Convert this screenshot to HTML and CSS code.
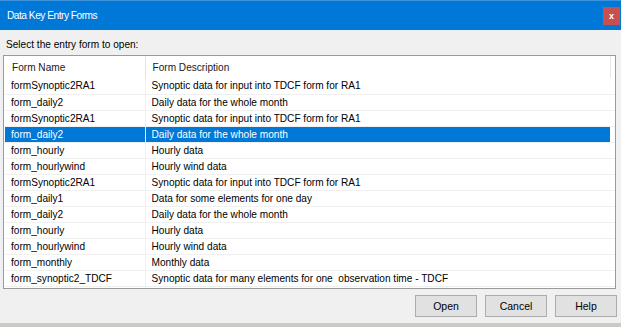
FILE: index.html
```html
<!DOCTYPE html>
<html lang="en">
<head>
  <meta charset="UTF-8" />
  <title>Data Key Entry Forms</title>
  <link rel="stylesheet" href="styles.css">
</head>
<body>
  <div class="window">
    <!-- TITLE BAR -->
    <div class="titlebar">
      <span class="title">Data Key Entry Forms</span>
      <span class="close">x</span>
    </div>

    <!-- DIALOG BODY -->
    <div class="content">
      <p class="prompt">Select the entry form to open:</p>

      <div class="listview">
        <table>
          <thead>
            <tr><th class="c-name">Form Name</th><th class="c-desc">Form Description</th><th class="c-fill"></th></tr>
          </thead>
          <tbody>
            <tr><td>formSynoptic2RA1</td><td>Synoptic data for input into TDCF form for RA1</td><td></td></tr>
            <tr><td>form_daily2</td><td>Daily data for the whole month</td><td></td></tr>
            <tr><td>formSynoptic2RA1</td><td>Synoptic data for input into TDCF form for RA1</td><td></td></tr>
            <tr class="selected"><td>form_daily2</td><td>Daily data for the whole month</td><td></td></tr>
            <tr><td>form_hourly</td><td>Hourly data</td><td></td></tr>
            <tr><td>form_hourlywind</td><td>Hourly wind data</td><td></td></tr>
            <tr><td>formSynoptic2RA1</td><td>Synoptic data for input into TDCF form for RA1</td><td></td></tr>
            <tr><td>form_daily1</td><td>Data for some elements for one day</td><td></td></tr>
            <tr><td>form_daily2</td><td>Daily data for the whole month</td><td></td></tr>
            <tr><td>form_hourly</td><td>Hourly data</td><td></td></tr>
            <tr><td>form_hourlywind</td><td>Hourly wind data</td><td></td></tr>
            <tr><td>form_monthly</td><td>Monthly data</td><td></td></tr>
            <tr><td>form_synoptic2_TDCF</td><td>Synoptic data for many elements for one&nbsp; observation time - TDCF</td><td></td></tr>
          </tbody>
        </table>
      </div>

      <div class="buttons">
        <button>Open</button>
        <button>Cancel</button>
        <button>Help</button>
      </div>
    </div>
  </div>
  <div class="strip"></div>
</body>
</html>
```

FILE: styles.css
```css
:root {
  --accent: #0078d7;
  --face: #f0f0f0;
  --grid: #f0f0f0;
  --ui: 'Liberation Sans', Arial, sans-serif;
}
* { margin:0; padding:0; box-sizing:border-box; }
body {
  width:621px; height:327px; overflow:hidden;
  background:var(--face); font-family:var(--ui); font-size:10.1px; color:#000;
}

/* TITLE BAR */
.titlebar {
  height:30px; background:var(--accent); border-top:1px solid #3d93dc;
  display:flex; align-items:center; padding-left:7px;
}
.title { color:#fff; font-size:10.2px; letter-spacing:-0.5px; }
.close {
  margin-left:auto; margin-right:1px; width:17px; height:18px;
  background:#c75050; color:#fff; font-size:9px; font-weight:bold;
  display:flex; align-items:center; justify-content:center;
}

/* BODY */
.content { height:293px; display:flex; flex-direction:column; }
.prompt { padding:8px 0 0 6px; height:25px; line-height:13px; }

/* LIST */
.listview {
  margin:0 5px 0 3px; height:234px; background:#fff;
  border:1px solid #9a9a9a; padding-left:1px; overflow:hidden;
}
table { border-collapse:collapse; width:100%; table-layout:fixed; }
th {
  height:22px; text-align:left; font-weight:normal; padding-left:7px;
  color:#1a1a1a;
}
th.c-name { width:140px; border-right:1px solid #e5e5e5; }
th.c-desc { width:465px; border-right:1px solid #e5e5e5; }
td {
  height:16px; padding:0 0 0 6px; white-space:nowrap; overflow:hidden;
  border-bottom:1px solid var(--grid); line-height:15px;
}
td:first-child { padding-left:6px; border-right:1px solid var(--grid); }
tr.selected td { background:var(--accent); color:#fff; }
tr.selected td:last-child { background:#fff; }

/* BUTTONS */
.buttons { display:flex; justify-content:flex-end; gap:8px; padding:6px 4px 0 0; }
button {
  width:62px; height:22px; background:#e1e1e1; border:1px solid #adadad;
  font-family:var(--ui); font-size:10.5px; color:#000;
}

.strip { height:4px; background:#cdc9c4; }
```
